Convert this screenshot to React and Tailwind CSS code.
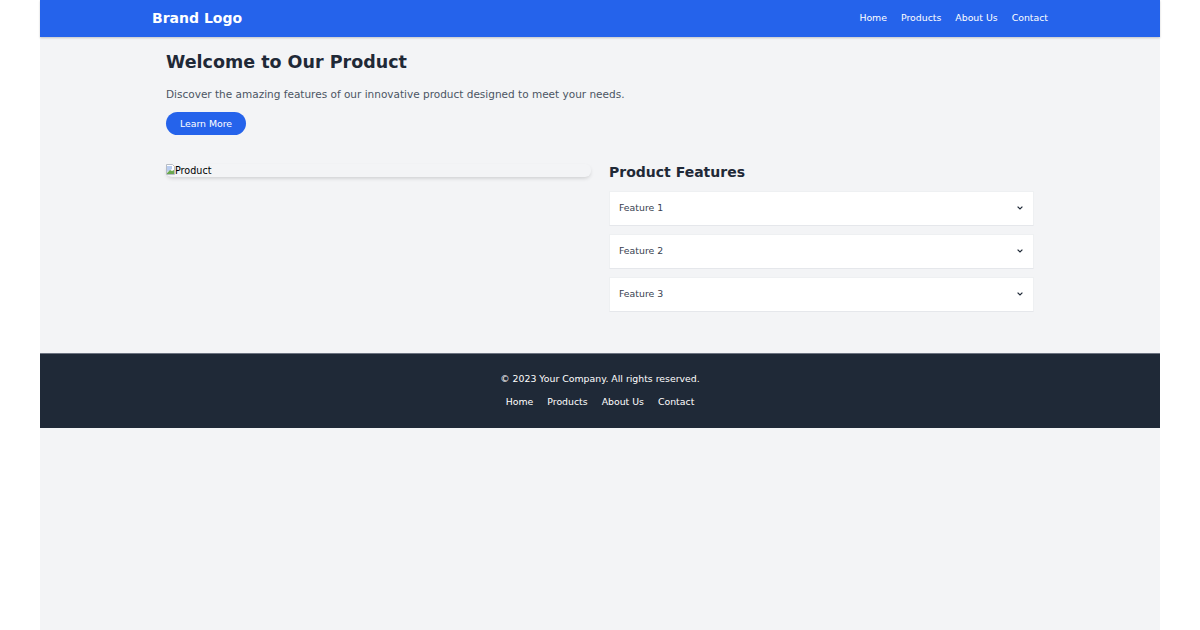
const navLinks = ["Home", "Products", "About Us", "Contact"];
const features = ["Feature 1", "Feature 2", "Feature 3"];

function FeatureRow({ label }) {
  return (
    <div className="flex h-[35px] items-center justify-between rounded-[1px] border border-[#eef0f2] border-b-[#e5e7eb] bg-white px-[9px] pb-[1px] text-[9.35px] text-[#374151]">
      <span>{label}</span>
      <svg width="6" height="4" viewBox="0 0 6 4" fill="none" className="mr-[1px]">
        <path d="M0.6 0.6L3 3L5.4 0.6" stroke="#1f2937" strokeWidth="1.2" />
      </svg>
    </div>
  );
}

export default function App() {
  return (
    <div className="min-h-[630px] bg-white font-['DejaVu_Sans',sans-serif]">
      <div className="mx-auto min-h-[630px] w-[1120px] bg-[#f3f4f6]">
        <header className="flex h-[37px] items-center justify-between bg-[#2563eb] px-[112px] text-white shadow-[0_1px_2px_rgba(0,0,0,0.2)]">
          <span className="text-[14px] font-bold">Brand Logo</span>
          <nav className="flex gap-[14px] text-[9.35px]">
            {navLinks.map((l) => (
              <span key={l}>{l}</span>
            ))}
          </nav>
        </header>

        <main className="px-[126px] pb-[41px]">
          <h1 className="pt-[14px] text-[17.5px] font-bold leading-[22px] text-[#1f2937]">Welcome to Our Product</h1>
          <p className="mt-[13px] text-[10.5px] leading-[16px] text-[#4b5563]">
            Discover the amazing features of our innovative product designed to meet your needs.
          </p>
          <button className="mt-[10px] flex h-[23px] w-[80px] items-center justify-center rounded-full bg-[#2563eb] pt-[1px] text-[9.35px] text-white">
            Learn More
          </button>

          <div className="mt-[29px] flex gap-[18px]">
            <div className="w-[425px]">
              <div className="flex h-[13px] items-start rounded-md text-[9.6px] leading-[14px] text-black shadow-[0_2px_4px_-1px_rgba(0,0,0,0.18)]">
                <svg width="9" height="11" viewBox="0 0 9 11" className="shrink-0">
                  <path d="M0.5 0.5h6l2 2v8h-8z" fill="#fff" stroke="#b6bcc4" />
                  <path d="M1 2h5v3l-3 2-2 1z" fill="#b9cdf0" />
                  <path d="M1 9l3-3 2 1 2-1v4H1z" fill="#6aa84f" />
                </svg>
                <span>Product</span>
              </div>
            </div>
            <div className="w-[425px]">
              <h2 className="text-[14px] font-bold leading-[16px] text-[#1f2937]">Product Features</h2>
              <div className="mt-[11px] flex flex-col gap-[8px]">
                {features.map((f) => (
                  <FeatureRow key={f} label={f} />
                ))}
              </div>
            </div>
          </div>
        </main>

        <footer className="flex h-[75px] flex-col items-center border-t border-[#6b7280] bg-[#1f2937] pt-[18px] text-[9.35px] text-white">
          <p className="leading-[14px]">© 2023 Your Company. All rights reserved.</p>
          <nav className="mt-[9px] flex gap-[14px] leading-[14px]">
            {navLinks.map((l) => (
              <span key={l}>{l}</span>
            ))}
          </nav>
        </footer>
      </div>
    </div>
  );
}
